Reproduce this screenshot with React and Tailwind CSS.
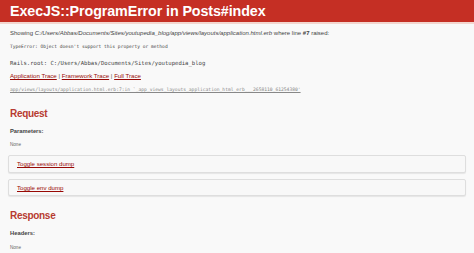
export default function App() {
  const sans = { fontFamily: '"Liberation Sans", Arial, sans-serif' };
  const mono = { fontFamily: '"DejaVu Sans Mono", "Liberation Mono", monospace' };
  return (
    <div className="w-[474px] h-[253px] overflow-hidden bg-[#f9f9f9] text-[#333]" style={sans}>
      <div className="h-[22px] bg-[#c52f24] px-[10px] flex items-center">
        <h1 className="text-white font-bold text-[14.3px] leading-[22px] tracking-[-0.1px]">ExecJS::ProgramError in Posts#index</h1>
      </div>
      <div className="h-[2px] bg-[#f3d6cf]" />
      <div className="px-[10px]">
        <div className="h-[18px] leading-[18px] text-[6px] text-[#444]">
          Showing <i>C:/Users/Abbas/Documents/Sites/youtupedia_blog/app/views/layouts/application.html.erb</i> where line <b>#7</b> raised:
        </div>
        <div className="h-[10px] leading-[10px] text-[4.6px] text-[#444]" style={mono}>
          TypeError: Object doesn't support this property or method
        </div>
        <div className="mt-[6px] h-[10px] leading-[10px] text-[5.6px] text-[#444]" style={mono}>
          Rails.root: C:/Users/Abbas/Documents/Sites/youtupedia_blog
        </div>
        <div className="mt-[3px] h-[10px] leading-[10px] text-[6.1px] text-[#555]">
          <span className="text-[#980905] underline">Application Trace</span> | <span className="text-[#980905] underline">Framework Trace</span> | <span className="text-[#980905] underline">Full Trace</span>
        </div>
        <div className="mt-[4px] h-[10px] leading-[10px] text-[4.65px] text-[#888] underline whitespace-nowrap" style={mono}>
          app/views/layouts/application.html.erb:7:in `_app_views_layouts_application_html_erb___2658110_61254380'
        </div>
        <div className="mt-[11px] h-[16px] leading-[16px] text-[10px] tracking-[-0.3px] font-bold text-[#b73b31]">Request</div>
        <div className="mt-[4px] h-[10px] leading-[10px] text-[5.8px] font-bold text-[#444]">Parameters:</div>
        <div className="mt-[5px] h-[8px] leading-[8px] text-[4.6px] text-[#666]">None</div>
        <div className="mt-[6px] h-[18px] mr-[-2px] ml-[-2px] border border-[#dedede] rounded-[2px] bg-[#f8f8f8] shadow-[0_1px_1px_rgba(0,0,0,0.08)] flex items-center px-[8px]">
          <span className="text-[6.1px] text-[#980905] underline">Toggle session dump</span>
        </div>
        <div className="mt-[6px] h-[17px] mr-[-2px] ml-[-2px] border border-[#dedede] rounded-[2px] bg-[#f8f8f8] shadow-[0_1px_1px_rgba(0,0,0,0.08)] flex items-center px-[8px]">
          <span className="text-[6.1px] text-[#980905] underline">Toggle env dump</span>
        </div>
        <div className="mt-[12px] h-[16px] leading-[16px] text-[10px] tracking-[-0.3px] font-bold text-[#b73b31]">Response</div>
        <div className="mt-[4px] h-[10px] leading-[10px] text-[5.8px] font-bold text-[#444]">Headers:</div>
        <div className="mt-[6px] h-[8px] leading-[8px] text-[4.6px] text-[#666]">None</div>
      </div>
    </div>
  );
}
